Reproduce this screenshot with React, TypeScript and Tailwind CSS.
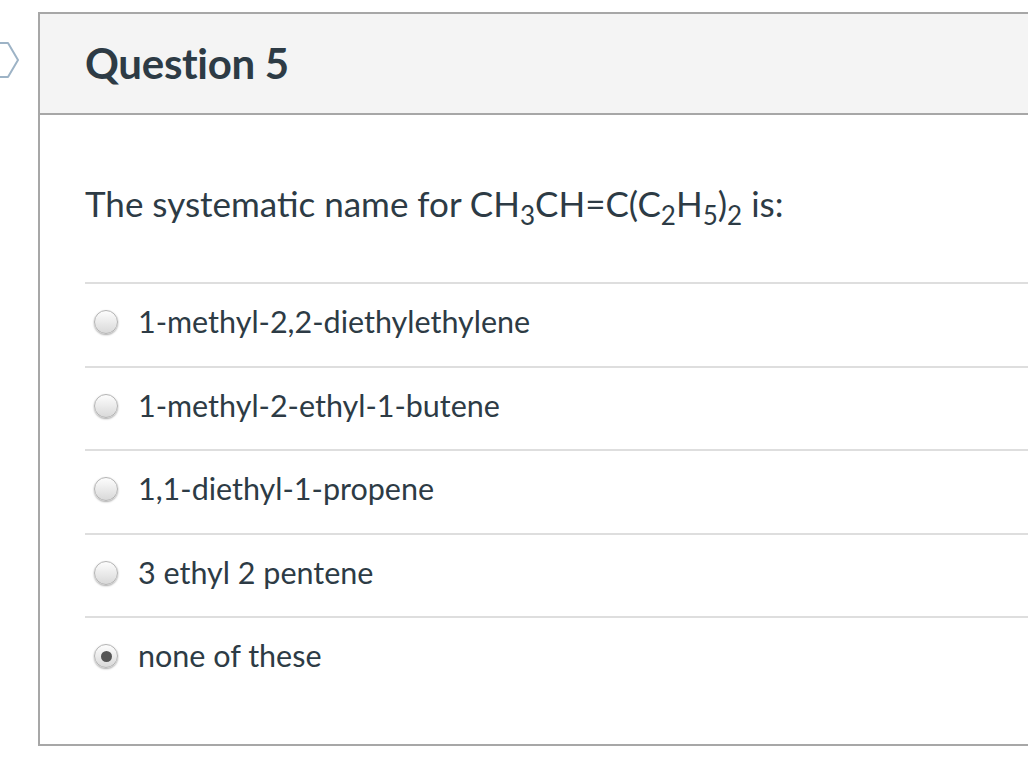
import React from 'react';

const answers = [
  { label: '1-methyl-2,2-diethylethylene', selected: false },
  { label: '1-methyl-2-ethyl-1-butene', selected: false },
  { label: '1,1-diethyl-1-propene', selected: false },
  { label: '3 ethyl 2 pentene', selected: false },
  { label: 'none of these', selected: true },
];

function Radio({ checked }: { checked: boolean }) {
  return (
    <span className="flex h-[24px] w-[24px] shrink-0 items-center justify-center rounded-full border border-[#b4b4b4] bg-gradient-to-b from-[#fdfdfd] to-[#d9d9d9] shadow-[0_1px_2px_rgba(0,0,0,0.35)]">
      {checked && <span className="h-[11px] w-[11px] rounded-full bg-[#555]" />}
    </span>
  );
}

function Sub({ children }: { children: React.ReactNode }) {
  return <span className="relative top-[8px] text-[26px] leading-none">{children}</span>;
}

export default function App() {
  return (
    <div className="relative h-[766px] w-[1028px] overflow-hidden bg-white text-[#2d3b45]" style={{ fontFamily: 'Lato, "Liberation Sans", sans-serif' }}>
      <svg className="absolute left-0 top-[42px]" width="22" height="36" viewBox="0 0 22 36">
        <path d="M-4 1 H8 L18 18 L8 35 H-4" fill="none" stroke="#9db3c6" strokeWidth="2" strokeLinejoin="round" />
      </svg>

      <div className="ml-[38px] mt-[12px] flex h-[734px] w-[1100px] flex-col border-2 border-[#a7a7a7]">
        <div className="flex h-[101px] items-center border-b-2 border-[#a7a7a7] bg-[#f4f4f4] pl-[45px]">
          <h2 className="text-[42px] font-bold tracking-[-0.3px]">Question 5</h2>
        </div>

        <div className="pl-[45px]">
          <p className="pt-[68px] text-[35px] leading-[40px]">
            The systematic name for CH<Sub>3</Sub>CH=C(C<Sub>2</Sub>H<Sub>5</Sub>)<Sub>2</Sub> is:
          </p>

          <div className="mt-[59px]">
            {answers.map((a) => (
              <div key={a.label} className="flex h-[83.5px] items-center gap-[20px] border-t-2 border-[#dedede] pb-[5px] pl-[9px]">
                <Radio checked={a.selected} />
                <span className="text-[30.5px]">{a.label}</span>
              </div>
            ))}
          </div>
        </div>
      </div>
    </div>
  );
}
